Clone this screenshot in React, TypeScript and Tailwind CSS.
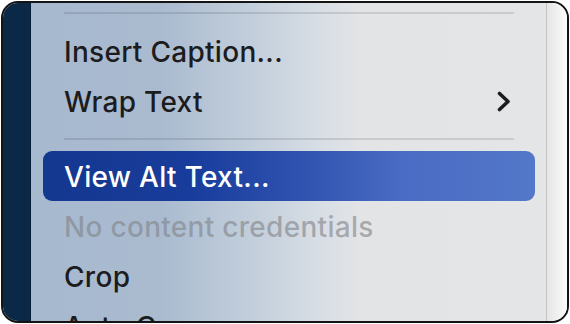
import React from "react";

function Separator({ top }: { top?: boolean }) {
  return (
    <div className={top ? "pt-[9px] pb-[12px]" : "pt-[11.5px] pb-[11.5px]"}>
      <div className="mx-[21px] h-[2px] bg-[rgba(0,0,0,0.11)]" />
    </div>
  );
}

function Row({
  label,
  kind = "normal",
  chevron = false,
}: {
  label: string;
  kind?: "normal" | "active" | "disabled";
  chevron?: boolean;
}) {
  const base =
    "h-[50px] shrink-0 flex items-center justify-between pl-[21.5px] pr-[24px] pt-[3px] leading-[47px] text-[28px] font-medium tracking-[0.3px] whitespace-nowrap";
  const cls =
    kind === "active"
      ? base +
        " rounded-[9px] text-white bg-[linear-gradient(to_right,#14388f_0%,#183c9b_30%,#2f52b0_52%,#4a6cc4_73%,#5377c9_100%)]"
      : kind === "disabled"
      ? base + " text-[rgba(128,130,134,0.6)]"
      : base + " text-[#1c1c1e]";
  return (
    <div className={cls}>
      <span>{label}</span>
      {chevron && (
        <svg width="14" height="21" viewBox="0 0 14 21" className="-mt-[3px]">
          <path
            d="M2.5 2.5 L11 10.5 L2.5 18.5"
            fill="none"
            stroke="#1c1c1e"
            strokeWidth="3.6"
            strokeLinecap="round"
            strokeLinejoin="round"
          />
        </svg>
      )}
    </div>
  );
}

export default function App() {
  return (
    <div className="w-[570px] h-[324px] bg-white p-[1px]">
      <div
        className="w-[568px] h-[322px] border-2 border-[#141414] rounded-[17px] overflow-hidden flex"
        style={{ fontFamily: "Inter, 'Noto Sans', sans-serif" }}
      >
        <div className="w-[28px] shrink-0 bg-[#0b2847] border-r border-[#081e36]" />
        <div className="flex-1 flex flex-col px-[11.5px] bg-[linear-gradient(to_right,#a7b9cf_0px,#aabbd0_130px,#c2cedb_220px,#d8dee5_290px,#e3e4e6_330px,#e4e5e7_100%)]">
          <Separator top />
          <Row label="Insert Caption..." />
          <Row label="Wrap Text" chevron />
          <Separator />
          <Row label="View Alt Text..." kind="active" />
          <Row label="No content credentials" kind="disabled" />
          <Row label="Crop" />
          <Row label="Auto Crop" />
        </div>
        <div className="w-[21px] shrink-0 border-l border-[#c4c4c4] bg-[linear-gradient(to_right,#e6e6e6,#f2f2f2_60%,#fbfbfb)]" />
      </div>
    </div>
  );
}
